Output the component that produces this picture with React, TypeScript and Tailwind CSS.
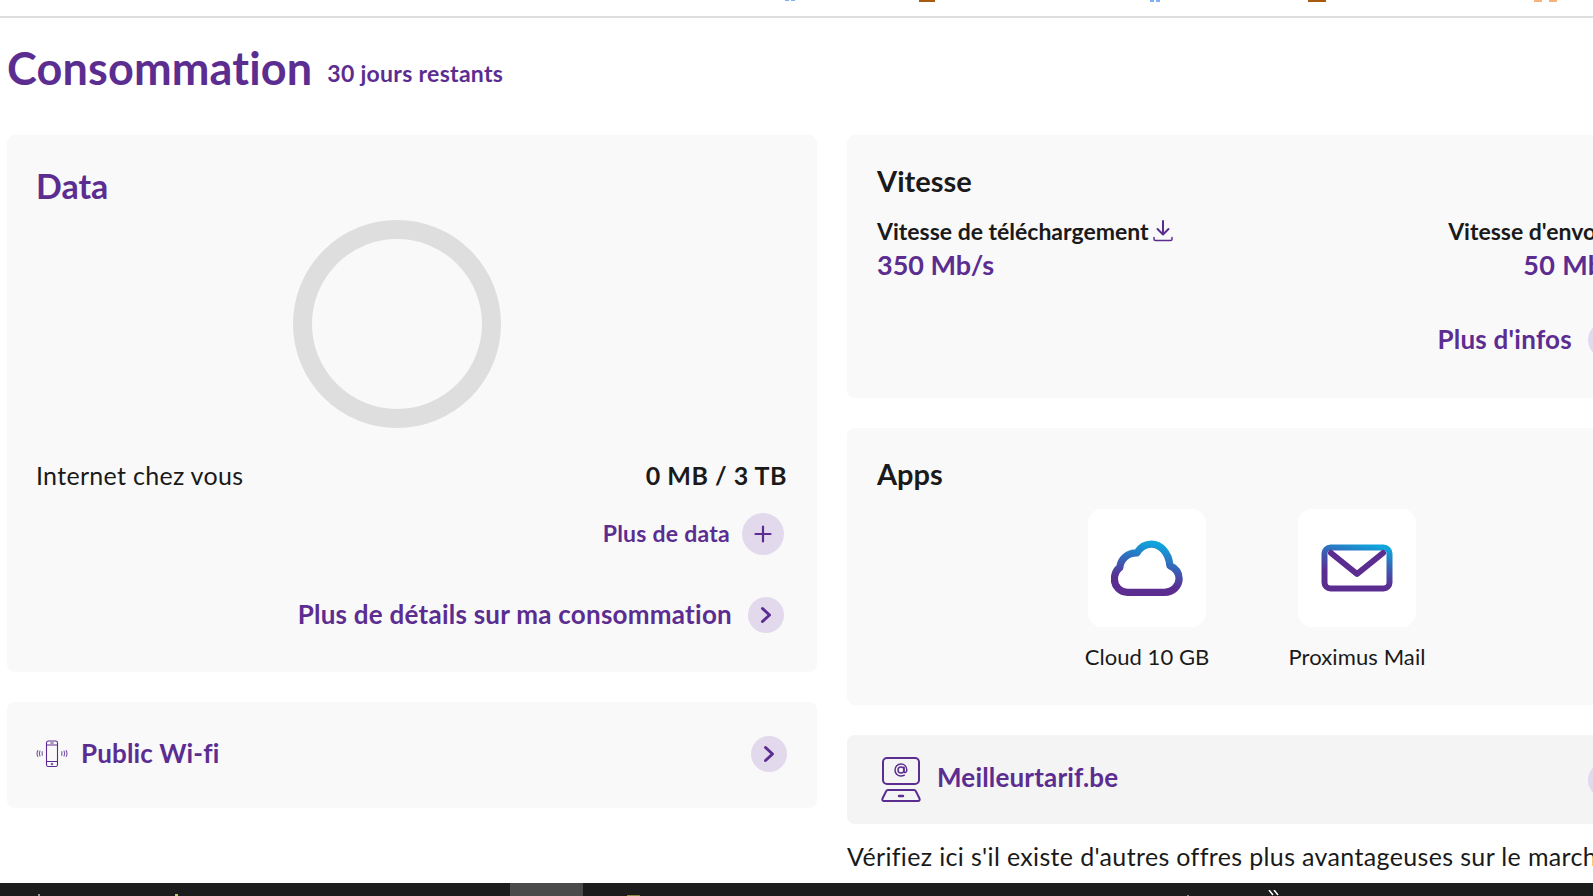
import React from "react";

const P = "text-[#5c2d91]";

function Circle({ size, children }: { size: string; children: React.ReactNode }) {
  return <span className={`${size} flex items-center justify-center rounded-full bg-[#e2d9ec] shrink-0`}>{children}</span>;
}

function Chevron() {
  return (
    <svg width="14" height="18" viewBox="0 0 14 18" fill="none" stroke="#5c2d91" strokeWidth="3" strokeLinecap="round" strokeLinejoin="round">
      <path d="M3.5 2.5 10.5 9 3.5 15.5" />
    </svg>
  );
}

function Cloud() {
  return (
    <svg width="72" height="57" viewBox="0 0 74 58" fill="none">
      <defs>
        <linearGradient id="cg" x1="0.7" y1="0" x2="0.45" y2="1">
          <stop offset="0" stopColor="#0ea5dc" />
          <stop offset="0.35" stopColor="#2f6fbe" />
          <stop offset="0.8" stopColor="#5c2d91" />
        </linearGradient>
      </defs>
      <path d="M17 53.5H55C63.5 53.5 70 47 70 39.500C70 33 66 28.500 60.500 26C59.500 13 51 4 41.500 4C35 4 30 7.500 26.500 13C17 13 10 19 9 28C5 31 3.500 35.500 3.500 40C3.500 47.500 9.500 53.500 17 53.500Z" stroke="url(#cg)" strokeWidth="7.500" strokeLinejoin="round" />
    </svg>
  );
}

function Mail() {
  return (
    <svg width="72" height="48" viewBox="0 0 72 48" fill="none">
      <defs>
        <linearGradient id="mg" x1="0.9" y1="0" x2="0.5" y2="1">
          <stop offset="0" stopColor="#0ea5dc" />
          <stop offset="0.4" stopColor="#3a5fb5" />
          <stop offset="0.8" stopColor="#5c2d91" />
        </linearGradient>
      </defs>
      <rect x="3.500" y="3.500" width="65" height="41" rx="6" stroke="url(#mg)" strokeWidth="6" />
      <path d="M10 9 36 30 62 9" stroke="#5c2d91" strokeWidth="6" strokeLinejoin="round" strokeLinecap="round" />
    </svg>
  );
}

function Phone() {
  return (
    <svg width="32" height="28" viewBox="0 0 32 28" fill="none" stroke="#5c2d91" strokeWidth="1.100" strokeLinecap="round">
      <rect x="10.500" y="1" width="11" height="25.500" rx="1.800" />
      <path d="M10.500 5h11M10.500 21.500h11M14.800 3h2.400M16 23.200v1.600M15.200 24h1.600" />
      <path d="M1.800 10.500c-1 2-1 4 0 6M4 11c-.7 1.500-.7 3.500 0 5M6.400 11.800c-.4 1-.4 2.400 0 3.400M30.200 10.500c1 2 1 4 0 6M28 11c.7 1.500.7 3.500 0 5M25.600 11.800c.4 1 .4 2.400 0 3.400" opacity="0.8" />
    </svg>
  );
}

function Computer() {
  return (
    <svg width="40" height="45" viewBox="0 0 40 45" fill="none" stroke="#5c2d91" strokeWidth="2" strokeLinejoin="round" strokeLinecap="round">
      <rect x="2" y="1" width="36" height="26" rx="4" />
      <path d="M7 33h26c1 0 1.500.4 2 1.500l3.500 7c.5 1.400 0 2.500-1.500 2.500H3c-1.500 0-2-1.100-1.500-2.500l3.500-7C5.500 33.400 6 33 7 33Z" />
      <path d="M18 39h4" strokeWidth="2.400" />
      <circle cx="20" cy="13" r="3" strokeWidth="1.500" />
      <path d="M23 10v4.500c0 1.600 2.800 1.600 2.800-1.500 0-3.500-2.500-6-5.800-6-3.500 0-6 2.700-6 6s2.500 6 6 6c1.300 0 2.300-.2 3.300-.8" strokeWidth="1.500" />
    </svg>
  );
}

function Download() {
  return (
    <svg width="22" height="24" viewBox="0 0 22 24" fill="none" stroke="#5c2d91" strokeWidth="2" strokeLinecap="round" strokeLinejoin="round">
      <path d="M11 2v13M5.500 10 11 15.500 16.500 10" />
      <path d="M2 18.500v1.500c0 1 .6 1.500 1.500 1.500h15c.9 0 1.500-.5 1.500-1.500v-1.500" strokeWidth="1.500" />
    </svg>
  );
}

function TopBar() {
  return (
    <div className="h-[18px] border-b-2 border-[#dddddd] flex items-start shrink-0">
      <span className="ml-[785px] w-[4px] h-[1px] bg-[#7fb0f2]" />
      <span className="ml-[2px] w-[4px] h-[1px] bg-[#7fb0f2]" />
      <span className="ml-[124px] w-[16px] h-[2px] bg-[#a85a10]" />
      <span className="ml-[215px] w-[4px] h-[2px] bg-[#7fb0f2]" />
      <span className="ml-[2px] w-[4px] h-[2px] bg-[#7fb0f2]" />
      <span className="ml-[148px] w-[18px] h-[2px] bg-[#a85a10]" />
      <span className="ml-[208px] w-[8px] h-[2px] bg-[#f6b27c]" />
      <span className="ml-[7px] w-[8px] h-[2px] bg-[#f6b27c]" />
    </div>
  );
}

function App() {
  return (
    <div className="w-[1593px] h-[896px] overflow-hidden bg-white flex flex-col text-[#1a1a1a]" style={{ fontFamily: '"Lato", "Noto Sans", sans-serif' }}>
      <TopBar />
      <div className="flex-1 min-h-0 overflow-hidden pl-[7px]">
        <div className={`flex items-end h-[117px] pb-[41px] ${P}`}>
          <h1 className="text-[45px] leading-[52px] tracking-[0.15px] font-bold">Consommation</h1>
          <span className="ml-[15px] mb-[5px] text-[23px] leading-[32px] tracking-[0.3px] font-bold">30 jours restants</span>
        </div>
        <div className="flex gap-[30px] w-[1650px] items-start">
          <div className="w-[810px] flex flex-col gap-[30px] shrink-0">
            <section className="h-[537px] bg-[#f9f9f9] rounded-lg pl-[29px] pr-[30px] pt-[30px]">
              <h2 className={`text-[34px] leading-[42px] font-bold ${P}`}>Data</h2>
              <div className="flex justify-center mt-[13px] pr-[29px]">
                <svg width="208" height="208" viewBox="0 0 208 208" fill="none">
                  <circle cx="104" cy="104" r="94.500" stroke="#dedede" strokeWidth="19" />
                </svg>
              </div>
              <div className="flex justify-between items-center mt-[32px] h-[32px] text-[25px] tracking-[0.3px]">
                <span>Internet chez vous</span>
                <span className="font-bold tracking-[0.5px]">0 MB / 3 TB</span>
              </div>
              <div className="flex justify-end items-center gap-[12px] mt-[21px] pr-[3px]">
                <span className={`pb-[2px] text-[23px] tracking-[0.25px] font-bold ${P}`}>Plus de data</span>
                <Circle size="w-[42px] h-[42px]">
                  <svg width="18" height="18" viewBox="0 0 18 18" stroke="#5c2d91" strokeWidth="2.200" strokeLinecap="round"><path d="M9 1.500v15M1.500 9h15" /></svg>
                </Circle>
              </div>
              <div className="flex justify-end items-center gap-[16px] mt-[40px] pr-[3px]">
                <span className={`text-[26px] tracking-[0.25px] font-bold ${P}`}>Plus de détails sur ma consommation</span>
                <Circle size="w-[36px] h-[36px]"><Chevron /></Circle>
              </div>
            </section>
            <section className="h-[106px] bg-[#f9f9f9] rounded-lg pl-[29px] pr-[30px] pb-[2px] flex items-center justify-between">
              <div className="flex items-center gap-[13px]">
                <Phone />
                <span className={`pb-[2px] text-[26px] tracking-[0.15px] font-bold ${P}`}>Public Wi-fi</span>
              </div>
              <Circle size="w-[36px] h-[36px]"><Chevron /></Circle>
            </section>
          </div>
          <div className="w-[810px] flex flex-col shrink-0">
            <section className="h-[263px] bg-[#f9f9f9] rounded-lg px-[30px] pt-[28px]">
              <h2 className="text-[29px] leading-[36px] font-bold">Vitesse</h2>
              <div className="flex justify-between mt-[17px]">
                <div>
                  <div className="flex items-center gap-[3px] text-[23px] leading-[30px] font-bold">
                    Vitesse de téléchargement <Download />
                  </div>
                  <div className={`text-[27px] leading-[38px] font-bold ${P}`}>350 Mb/s</div>
                </div>
                <div className="text-right">
                  <div className="flex items-center gap-[3px] text-[23px] leading-[30px] font-bold">
                    Vitesse d'envoi <Download />
                  </div>
                  <div className={`text-[27px] leading-[38px] tracking-[0.3px] font-bold ${P}`}>50 Mb/s</div>
                </div>
              </div>
              <div className="flex justify-end items-center gap-[16px] mt-[36px] pr-[3px]">
                <span className={`text-[26px] tracking-[0.25px] font-bold ${P}`}>Plus d'infos</span>
                <Circle size="w-[36px] h-[36px]"><Chevron /></Circle>
              </div>
            </section>
            <section className="h-[277px] mt-[30px] bg-[#f9f9f9] rounded-lg px-[30px] pt-[28px]">
              <h2 className="text-[29px] leading-[36px] font-bold">Apps</h2>
              <div className="flex justify-center gap-[92px] mt-[17px]">
                <div className="w-[118px] flex flex-col items-center">
                  <div className="w-[118px] h-[118px] bg-white rounded-[14px] flex items-center justify-center"><Cloud /></div>
                  <span className="mt-[16px] text-[22px] leading-[28px] tracking-[0.05px] whitespace-nowrap">Cloud 10 GB</span>
                </div>
                <div className="w-[118px] flex flex-col items-center">
                  <div className="w-[118px] h-[118px] bg-white rounded-[14px] flex items-center justify-center"><Mail /></div>
                  <span className="mt-[16px] text-[22px] leading-[28px] tracking-[0.1px] whitespace-nowrap">Proximus Mail</span>
                </div>
              </div>
            </section>
            <section className="h-[89px] mt-[30px] bg-[#f4f4f4] rounded-lg pl-[34px] pr-[33px] flex items-center justify-between">
              <div className="flex items-center gap-[16px]">
                <Computer />
                <span className={`pb-[5px] text-[26px] tracking-[0.17px] font-bold ${P}`}>Meilleurtarif.be</span>
              </div>
              <Circle size="w-[36px] h-[36px]"><Chevron /></Circle>
            </section>
            <p className="mt-[16px] text-[25px] leading-[32px] tracking-[0.35px] whitespace-nowrap">Vérifiez ici s'il existe d'autres offres plus avantageuses sur le marché</p>
          </div>
        </div>
      </div>
      <div className="h-[13px] bg-[#1c1c1c] shrink-0 flex items-end">
        <span className="ml-[38px] w-[2px] h-[2px] bg-[#9a9a9a]" />
        <span className="ml-[135px] w-[3px] h-[2px] bg-[#c8c878]" />
        <span className="ml-[332px] w-[73px] h-full bg-[#4a4a4a]" />
        <span className="ml-[44px] w-[13px] h-[1px] bg-[#8a8540]" />
        <span className="ml-[547px] w-[2px] h-[1px] bg-[#8a8a8a]" />
        <svg className="ml-[79px]" width="12" height="6" viewBox="0 0 12 6" fill="none" stroke="#ffffff" strokeWidth="1.500">
          <path d="M1 0 5 5M6 0l4 5" />
        </svg>
      </div>
    </div>
  );
}

export default App;
